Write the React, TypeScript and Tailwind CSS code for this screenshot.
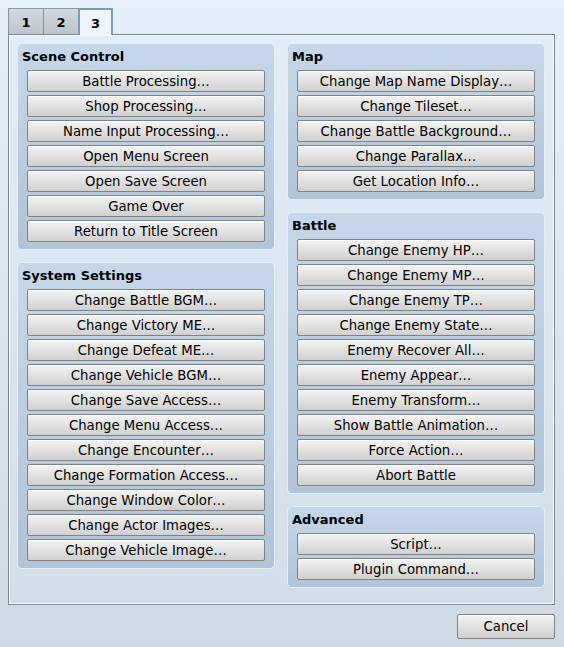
import React from 'react';

const groupsLeft = [
  {
    title: 'Scene Control',
    items: ['Battle Processing…', 'Shop Processing…', 'Name Input Processing…', 'Open Menu Screen', 'Open Save Screen', 'Game Over', 'Return to Title Screen'],
  },
  {
    title: 'System Settings',
    items: [
      'Change Battle BGM…',
      'Change Victory ME…',
      'Change Defeat ME…',
      'Change Vehicle BGM…',
      'Change Save Access…',
      'Change Menu Access…',
      'Change Encounter…',
      'Change Formation Access…',
      'Change Window Color…',
      'Change Actor Images…',
      'Change Vehicle Image…',
    ],
  },
];

const groupsRight = [
  {
    title: 'Map',
    items: ['Change Map Name Display…', 'Change Tileset…', 'Change Battle Background…', 'Change Parallax…', 'Get Location Info…'],
  },
  {
    title: 'Battle',
    items: [
      'Change Enemy HP…',
      'Change Enemy MP…',
      'Change Enemy TP…',
      'Change Enemy State…',
      'Enemy Recover All…',
      'Enemy Appear…',
      'Enemy Transform…',
      'Show Battle Animation…',
      'Force Action…',
      'Abort Battle',
    ],
  },
  {
    title: 'Advanced',
    items: ['Script…', 'Plugin Command…'],
  },
];

function CmdButton({ label }: { label: string }) {
  return (
    <button className="h-[22px] w-full rounded-[2px] border border-[#7d8287] bg-gradient-to-b from-[#f4f4f4] to-[#d0d0d0] pt-[1px] text-[13.25px] leading-none text-black shadow-[inset_0_1px_0_#ffffff]">
      {label}
    </button>
  );
}

function Group({ title, items }: { title: string; items: string[] }) {
  return (
    <div className="rounded-[5px] border border-[#e4eef8] bg-gradient-to-b from-[#c6d7e9] to-[#b1c4d8] px-[9px] pb-[7px] pt-[4px]">
      <div className="-ml-[5px] mb-[4px] h-[18px] text-[13px] font-bold leading-[18px] text-black">{title}</div>
      <div className="flex flex-col gap-[3px]">
        {items.map((it) => (
          <CmdButton key={it} label={it} />
        ))}
      </div>
    </div>
  );
}

export default function App() {
  return (
    <div
      className="flex h-[647px] w-[564px] flex-col bg-gradient-to-b from-[#e6f0fa] to-[#cfdae4] text-black"
      style={{ fontFamily: '"DejaVu Sans", Verdana, sans-serif' }}
    >
      {/* Tabs */}
      <div className="flex pl-[8px] pt-[8px]">
        {['1', '2'].map((t) => (
          <div
            key={t}
            className="-mr-px flex h-[26px] w-[36px] items-center justify-center border border-b-0 border-[#8c959e] bg-gradient-to-b from-[#d4dade] to-[#bcc4cc] pt-[2px] text-[13px] font-bold"
          >
            {t}
          </div>
        ))}
        <div className="relative z-10 -mb-px flex h-[27px] w-[35px] items-center justify-center border-2 border-b-0 border-[#7a9bbd] bg-[#eef5fc] pt-[2px] text-[13px] font-bold">
          3
        </div>
      </div>

      {/* Tab panel */}
      <div className="ml-[8px] mr-[9px] h-[571px] border border-[#7f8891] shadow-[inset_1px_1px_0_#ffffff,inset_-1px_-1px_0_#ffffff] bg-gradient-to-b from-[#e3edf8] to-[#d3dee8]">
        <div className="grid grid-cols-2 gap-[12px] pl-[8px] pr-[9px] pt-[8px]">
          <div className="flex flex-col gap-[12px]">
            {groupsLeft.map((g) => (
              <Group key={g.title} {...g} />
            ))}
          </div>
          <div className="flex flex-col gap-[12px]">
            {groupsRight.map((g) => (
              <Group key={g.title} {...g} />
            ))}
          </div>
        </div>
      </div>

      {/* Footer */}
      <div className="flex justify-end pr-[9px] pt-[9px]">
        <button className="h-[25px] w-[98px] rounded-[2px] border border-[#7d8287] bg-gradient-to-b from-[#f4f4f4] to-[#d0d0d0] pt-[1px] text-[13.25px] text-black shadow-[inset_0_1px_0_#ffffff]">
          Cancel
        </button>
      </div>
    </div>
  );
}
